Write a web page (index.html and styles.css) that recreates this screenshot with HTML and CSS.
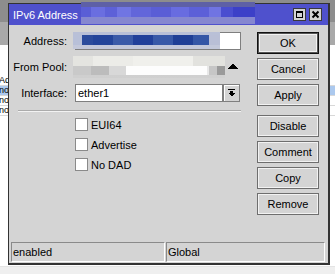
FILE: index.html
```html
<!DOCTYPE html>
<html>
<head>
<meta charset="utf-8">
<link rel="stylesheet" href="styles.css">
</head>
<body>
<div class="desk">
  <div class="band dark"></div>
  <div class="band light"></div>
  <div class="list">
    <div class="lrow head">Ad</div>
    <div class="lrow sel">no</div>
    <div class="lrow">no</div>
    <div class="lrow">no</div>
  </div>
  <div class="foot"></div>
</div>

<div class="win">
  <div class="title">
    <span class="ttext">IPv6 Address</span>
    <div class="tbtns">
      <svg class="tbtn" width="13" height="13" viewBox="0 0 13 13" shape-rendering="crispEdges">
        <rect x="0.5" y="0.5" width="12" height="12" fill="#d4d4d4" stroke="#3a3a3a"/>
        <rect x="3" y="3" width="7" height="2" fill="#000"/>
        <rect x="3" y="5" width="1" height="5" fill="#000"/>
        <rect x="9" y="5" width="1" height="5" fill="#000"/>
        <rect x="3" y="9" width="7" height="1" fill="#000"/>
      </svg>
      <svg class="tbtn" width="13" height="13" viewBox="0 0 13 13">
        <rect x="0.5" y="0.5" width="12" height="12" fill="#d4d4d4" stroke="#3a3a3a" shape-rendering="crispEdges"/>
        <path d="M3.5 3.5 L9.5 9.5 M9.5 3.5 L3.5 9.5" stroke="#000" stroke-width="2"/>
      </svg>
    </div>
  </div>

  <div class="main">
    <div class="form">
      <div class="frow">
        <span class="lbl">Address:</span>
        <div class="field"><div class="input wide"></div></div>
      </div>
      <div class="frow">
        <span class="lbl">From Pool:</span>
        <div class="field pool">
          <svg width="10" height="6" viewBox="0 0 10 6" shape-rendering="crispEdges"><polygon points="5,0 10,6 0,6" fill="#000"/></svg>
        </div>
      </div>
      <div class="frow">
        <span class="lbl">Interface:</span>
        <div class="field">
          <div class="input iface">ether1</div>
          <div class="dd">
            <svg width="7" height="8" viewBox="0 0 7 8" shape-rendering="crispEdges">
              <rect x="0" y="0" width="7" height="1" fill="#000"/>
              <rect x="2" y="2" width="3" height="2" fill="#000"/>
              <polygon points="0,4 7,4 3.5,7.5" fill="#000"/>
            </svg>
          </div>
        </div>
      </div>
      <div class="sep"></div>
      <div class="checks">
        <label class="chk"><span class="box"></span><span>EUI64</span></label>
        <label class="chk"><span class="box"></span><span>Advertise</span></label>
        <label class="chk"><span class="box"></span><span>No DAD</span></label>
      </div>
    </div>
    <div class="btns">
      <div class="btn def">OK</div>
      <div class="btn">Cancel</div>
      <div class="btn">Apply</div>
      <div class="btn grp">Disable</div>
      <div class="btn">Comment</div>
      <div class="btn">Copy</div>
      <div class="btn">Remove</div>
    </div>
  </div>

  <div class="status">
    <div class="panel p1">enabled</div>
    <div class="panel p2">Global</div>
  </div>

  <div class="blur blur-title"></div>
  <div class="blur blur-addr"></div>
  <div class="blur blur-pool"></div>
</div>
</body>
</html>
```

FILE: styles.css
```css
* { box-sizing: border-box; }
html, body { margin: 0; padding: 0; }
body {
  width: 335px;
  height: 274px;
  overflow: hidden;
  font-family: "Liberation Sans", Arial, sans-serif;
  font-size: 11px;
  color: #000;
  position: relative;
  background: #fff;
}

/* background application */
.desk { display: flex; flex-direction: column; height: 274px; }
.band.dark { height: 22px; background: #8d8d8d; }
.band.light { height: 23px; background: #a9a9a9; }
.list { flex: 1; background: #fff; padding-top: 31px; }
.lrow {
  height: 10px;
  line-height: 9px;
  font-size: 9px;
  border-bottom: 1px solid #d8d8d8;
  padding-left: 0;
  margin-left: -1px;
  white-space: nowrap;
  overflow: hidden;
}
.lrow.sel { background: #acc9ee; }
.foot { height: 8px; background: #efefef; border-top: 1px solid #e4e4e4; }

/* window */
.win {
  position: absolute;
  left: 8px;
  top: 3px;
  width: 322px;
  height: 262px;
  background: #d4d4d4;
  border: 1px solid #333;
  border-right-width: 2px;
  border-bottom-width: 2px;
  display: flex;
  flex-direction: column;
}

.title {
  height: 21px;
  background: #4f51cd;
  color: #fff;
  display: flex;
  align-items: center;
  padding-left: 4px;
  padding-right: 6px;
}
.ttext { flex: 1; font-size: 11px; }
.tbtns { display: flex; gap: 3px; }
.tbtn { display: block; }

.main {
  height: 217px;
  display: flex;
  padding-top: 7px;
}
.form { width: 232px; }
.frow {
  display: grid;
  grid-template-columns: 58px 166px;
  column-gap: 8px;
  height: 18px;
  align-items: center;
  margin-bottom: 8px;
}
.frow:nth-child(3) { margin-bottom: 0; }
.lbl { text-align: right; white-space: nowrap; }
.field { display: flex; height: 18px; align-items: stretch; }
.input {
  background: #fff;
  border: 1px solid #7f7f7f;
  padding-left: 2px;
  line-height: 16px;
}
.input.wide { width: 166px; }
.input.iface { width: 148px; }
.dd {
  width: 17px;
  background: #d4d4d4;
  border: 1px solid #7f7f7f;
  box-shadow: inset 1px 1px 0 #fff;
  display: flex;
  align-items: center;
  justify-content: center;
}
.field.pool {
  justify-content: flex-end;
  align-items: center;
  padding-right: 3px;
}
.field.pool svg { display: block; margin-top: -2px; }

.sep {
  margin: 8px 0 0 9px;
  width: 223px;
  border-top: 1px solid #ababab;
  border-bottom: 1px solid #f2f2f2;
}
.checks {
  margin-top: 6px;
  padding-left: 66px;
  display: flex;
  flex-direction: column;
  gap: 7px;
}
.chk { display: flex; align-items: center; height: 13px; gap: 3px; }
.box {
  width: 13px;
  height: 13px;
  background: #fff;
  border: 1px solid #8a8a8a;
}

.btns {
  margin-left: 16px;
  width: 62px;
  display: flex;
  flex-direction: column;
  gap: 4px;
}
.btn {
  height: 22px;
  border: 1px solid #6e6e6e;
  box-shadow: inset 0 0 0 1px #f2f2f2;
  background: #d4d4d4;
  text-align: center;
  line-height: 20px;
  font-size: 11px;
}
.btn.def {
  border-color: #111;
  box-shadow: inset 0 0 0 1px #555, inset 0 0 0 2px #f2f2f2;
}
.btn.grp { margin-top: 5px; }

.status {
  height: 21px;
  display: flex;
  gap: 1px;
  padding: 0 3px 1px 2px;
}
.panel {
  height: 20px;
  border-top: 1px solid #8a8a8a;
  border-left: 1px solid #8a8a8a;
  border-bottom: 1px solid #fff;
  border-right: 1px solid #fff;
  padding-left: 1px;
  line-height: 18px;
}
.p1 { width: 154px; }
.p2 { width: 159px; }

/* pixelated (censored) areas */
.blur { position: absolute; }
.blur-title {
  left: 72px;
  top: -2px;
  width: 174px;
  height: 22px;
  background:
    linear-gradient(to bottom, #5e60a6 0 5px, transparent 5px 15px, #8587d0 15px 22px),
    linear-gradient(to right, #5a5ed6 0 10px, #6a6ee0 10px 24px, #5d61d8 24px 36px, #7075e3 36px 50px, #6266da 50px 70px, #5a5ed6 70px 90px, #686ce0 90px 108px, #5c60d8 108px 128px, #7074e2 128px 140px, #4a4ed0 140px 152px, #3c40c8 152px 174px);
}
.blur-addr {
  left: 64px;
  top: 28px;
  width: 147px;
  height: 17px;
  background:
    linear-gradient(to bottom, #b9c0d7 0 3px, transparent 3px 13px, #c3c8da 13px 17px),
    linear-gradient(to right, #b8c0d8 0 9px, #2b4b9c 9px 20px, #23449a 20px 40px, #3a5aa8 40px 60px, #21409a 60px 80px, #3859a8 80px 100px, #1f3f96 100px 120px, #3456a6 120px 136px, #b9bfd6 136px 147px);
}
.blur-pool {
  left: 64px;
  top: 52px;
  width: 152px;
  height: 22px;
  background:
    linear-gradient(to right, transparent 0 136px, #c6c6c6 136px 144px, #9a9a9a 144px 152px) 0 10px / 152px 9px no-repeat,
    linear-gradient(to right, #c9c9c9 0 18px, #bcbcbc 18px 36px, #d8d8d8 36px 53px, #fdfdfd 53px 134px, #e8e8e8 134px 152px) 0 10px / 152px 9px no-repeat,
    linear-gradient(to right, #e4e4e0 0 20px, #ecece8 20px 60px, #f0f0ec 60px 120px, #e2e2de 120px 152px) 0 0 / 152px 10px no-repeat,
    linear-gradient(to right, #cfcfcf, #d0d0d0) 0 19px / 152px 3px no-repeat;
}
```
